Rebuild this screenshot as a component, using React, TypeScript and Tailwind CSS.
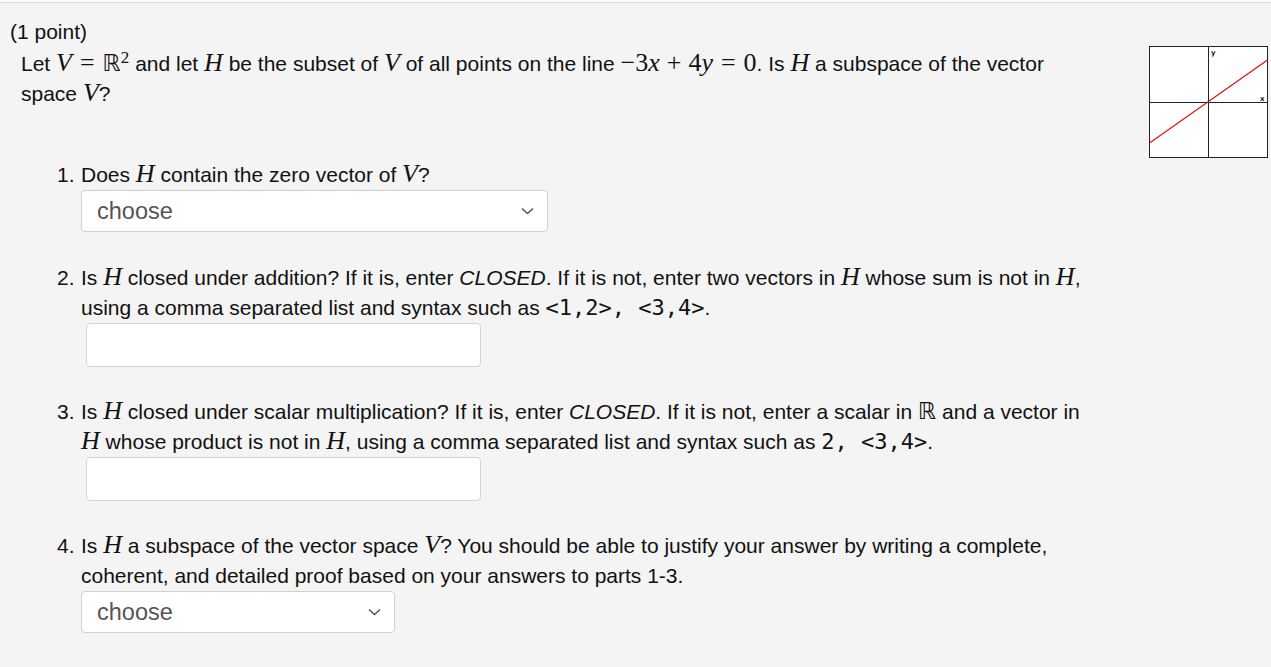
import type { ReactNode } from "react";

// math helpers: italic variables and upright symbols in a serif face
const M = ({ children }: { children: ReactNode }) => (
  <span className="font-['Liberation_Serif','DejaVu_Serif',serif] italic text-[26px] leading-none">{children}</span>
);
const U = ({ children }: { children: ReactNode }) => (
  <span className="font-['Liberation_Serif','DejaVu_Serif',serif] text-[26px] leading-none">{children}</span>
);
const Eq = () => (
  <span className="font-['Liberation_Serif','DejaVu_Serif',serif] text-[26px] leading-none mx-[8px]">=</span>
);
const Plus = () => (
  <span className="font-['Liberation_Serif','DejaVu_Serif',serif] text-[26px] leading-none mx-[7px]">+</span>
);
const R = () => <span className="font-['DejaVu_Sans',serif] text-[23px] leading-none">ℝ</span>;
const Code = ({ children }: { children: ReactNode }) => (
  <span className="font-['DejaVu_Sans_Mono',monospace] text-[22px] leading-none whitespace-pre">{children}</span>
);

function Chevron() {
  return (
    <svg
      width="13"
      height="8"
      viewBox="0 0 13 8"
      className="pointer-events-none absolute right-[14px] top-1/2 -translate-y-1/2"
    >
      <path d="M1 1.5 L6.5 6.5 L12 1.5" fill="none" stroke="#555" strokeWidth="1.6" />
    </svg>
  );
}

function Choose({ width }: { width: string }) {
  return (
    <div className={`relative ${width}`}>
      <select className="w-full h-[42px] appearance-none bg-white border border-[#cfcfcf] rounded-[4px] pl-[15px] text-[23.5px] text-[#555] font-['Liberation_Sans',Arial,sans-serif] outline-none">
        <option>choose</option>
      </select>
      <Chevron />
    </div>
  );
}

function AnswerBox() {
  return (
    <input
      type="text"
      className="block ml-[5px] w-[395px] h-[44px] bg-white border border-[#d2d2d2] rounded-[4px] outline-none"
    />
  );
}

function Item({ n, children, className }: { n: number; children: ReactNode; className?: string }) {
  return (
    <div className={`flex ${className ?? ""}`}>
      <span className="w-[24px] shrink-0">{n}.</span>
      <div className="flex-1">{children}</div>
    </div>
  );
}

function Graph() {
  return (
    <svg width="120" height="113" viewBox="0 0 120 113" className="shrink-0">
      <rect x="0.5" y="0.5" width="118" height="111" fill="#fff" stroke="#222" strokeWidth="1" />
      <line x1="59.5" y1="0.5" x2="59.5" y2="111.5" stroke="#222" strokeWidth="1" />
      <line x1="0.5" y1="56.5" x2="118.5" y2="56.5" stroke="#222" strokeWidth="1" />
      <line x1="0.5" y1="97" x2="118.5" y2="14" stroke="#d11" strokeWidth="1.2" />
      <text x="62" y="9" fontSize="7" fontWeight="bold" fontFamily="DejaVu Sans, sans-serif" fill="#222">y</text>
      <text x="111" y="55" fontSize="7" fontWeight="bold" fontFamily="DejaVu Sans, sans-serif" fill="#222">x</text>
    </svg>
  );
}

export default function App() {
  return (
    <div className="min-h-[667px] bg-[#f4f4f4] text-[#111] font-['Liberation_Sans',Arial,sans-serif] text-[21px] leading-[30px]">
      {/* top strip */}
      <div className="h-[2px] bg-[#fbfbfb]" />
      <div className="h-px bg-[#dedede]" />

      <div className="flex pt-[14px]">
        <div className="w-[1100px] shrink-0">
          <div className="pl-[10px]">(1 point)</div>

          <p className="mt-[2px] pl-[21px]">
            Let <M>V</M>
            <Eq />
            <R />
            <sup className="font-['Liberation_Serif',serif] text-[17px]">2</sup> and let <M>H</M> be the subset of{" "}
            <M>V</M> of all points on the line <U>−3</U>
            <M>x</M>
            <Plus />
            <U>4</U>
            <M>y</M>
            <Eq />
            <U>0</U>. Is <M>H</M> a subspace of the vector
            <br />
            space <M>V</M>?
          </p>

          <div className="pl-[57px]">
            <Item n={1} className="mt-[51px]">
              <div>
                Does <M>H</M> contain the zero vector of <M>V</M>?
              </div>
              <Choose width="w-[467px]" />
            </Item>

            <Item n={2} className="mt-[31px]">
              <div>
                Is <M>H</M> closed under addition? If it is, enter <i>CLOSED</i>. If it is not, enter two vectors in{" "}
                <M>H</M> whose sum is not in <M>H</M>, using a comma separated list and syntax such as{" "}
                <Code>{"<1,2>, <3,4>"}</Code>.
              </div>
              <AnswerBox />
            </Item>

            <Item n={3} className="mt-[30px]">
              <div>
                Is <M>H</M> closed under scalar multiplication? If it is, enter <i>CLOSED</i>. If it is not, enter a scalar
                in <R /> and a vector in <M>H</M> whose product is not in <M>H</M>, using a comma separated list and syntax
                such as <Code>{"2, <3,4>"}</Code>.
              </div>
              <AnswerBox />
            </Item>

            <Item n={4} className="mt-[30px]">
              <div>
                Is <M>H</M> a subspace of the vector space <M>V</M>? You should be able to justify your answer by writing a
                complete, coherent, and detailed proof based on your answers to parts 1-3.
              </div>
              <Choose width="w-[314px]" />
            </Item>
          </div>
        </div>

        <div className="ml-auto mr-[2px] mt-[29px]">
          <Graph />
        </div>
      </div>
    </div>
  );
}
